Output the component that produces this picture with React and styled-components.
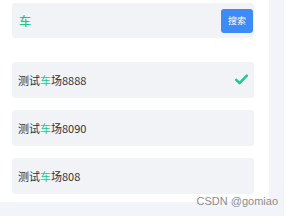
import styled, { createGlobalStyle } from 'styled-components';

const Global = createGlobalStyle`
  body {
    margin: 0;
    background: #fff;
    font-family: "Noto Sans CJK SC", "Noto Sans", sans-serif;
  }
`;

const Page = styled.div`
  position: relative;
  width: 284px;
  height: 216px;
  background: #f2f4f9;
`;

const Panel = styled.div`
  width: 269px;
  height: 202px;
  background: #fff;
  padding: 3px 15px 0 12px;
  box-sizing: border-box;
  display: flex;
  flex-direction: column;
`;

const SearchBar = styled.div`
  height: 35px;
  background: #f2f3f7;
  border-radius: 4px;
  display: flex;
  align-items: center;
  justify-content: space-between;
  padding: 0 1px 0 7px;
  box-shadow: 0 0 1px rgba(0, 0, 0, 0.05);
`;

const Keyword = styled.span`
  color: #1fc98e;
  font-size: 12px;
  font-weight: 500;
`;

const SearchBtn = styled.button`
  width: 32px;
  height: 24px;
  border: 0;
  border-radius: 3px;
  background: #3d8bf7;
  color: #fff;
  font-family: inherit;
  font-size: 9px;
  padding: 0;
`;

const List = styled.div`
  margin-top: 24px;
  display: flex;
  flex-direction: column;
  gap: 12px;
`;

const Item = styled.div`
  height: 35px;
  background: #f2f3f7;
  border-radius: 4px;
  display: flex;
  align-items: center;
  justify-content: space-between;
  padding: 0 6px 1px 6px;
  font-size: 11px;
  color: #333;
`;

const Hit = styled.span`
  color: #1fc98e;
`;

const Watermark = styled.span`
  position: absolute;
  right: 6px;
  bottom: 9px;
  font-family: "Liberation Sans", Arial, sans-serif;
  font-size: 11px;
  color: #8c8c8c;
`;

const Check = () => (
  <svg width="13" height="11" viewBox="0 0 13 11">
    <path d="M1.2 5.8 L4.6 9.2 L11.8 1.6" fill="none" stroke="#1fc98e" strokeWidth="2.4" strokeLinecap="round" strokeLinejoin="round" />
  </svg>
);

const items = [
  { suffix: '8888', checked: true },
  { suffix: '8090' },
  { suffix: '808' },
];

export default function App() {
  return (
    <>
      <Global />
      <Page>
        <Panel>
          <SearchBar>
            <Keyword>车</Keyword>
            <SearchBtn>搜索</SearchBtn>
          </SearchBar>
          <List>
            {items.map((it) => (
              <Item key={it.suffix}>
                <span>测试<Hit>车</Hit>场{it.suffix}</span>
                {it.checked && <Check />}
              </Item>
            ))}
          </List>
        </Panel>
        <Watermark>CSDN @gomiao</Watermark>
      </Page>
    </>
  );
}
